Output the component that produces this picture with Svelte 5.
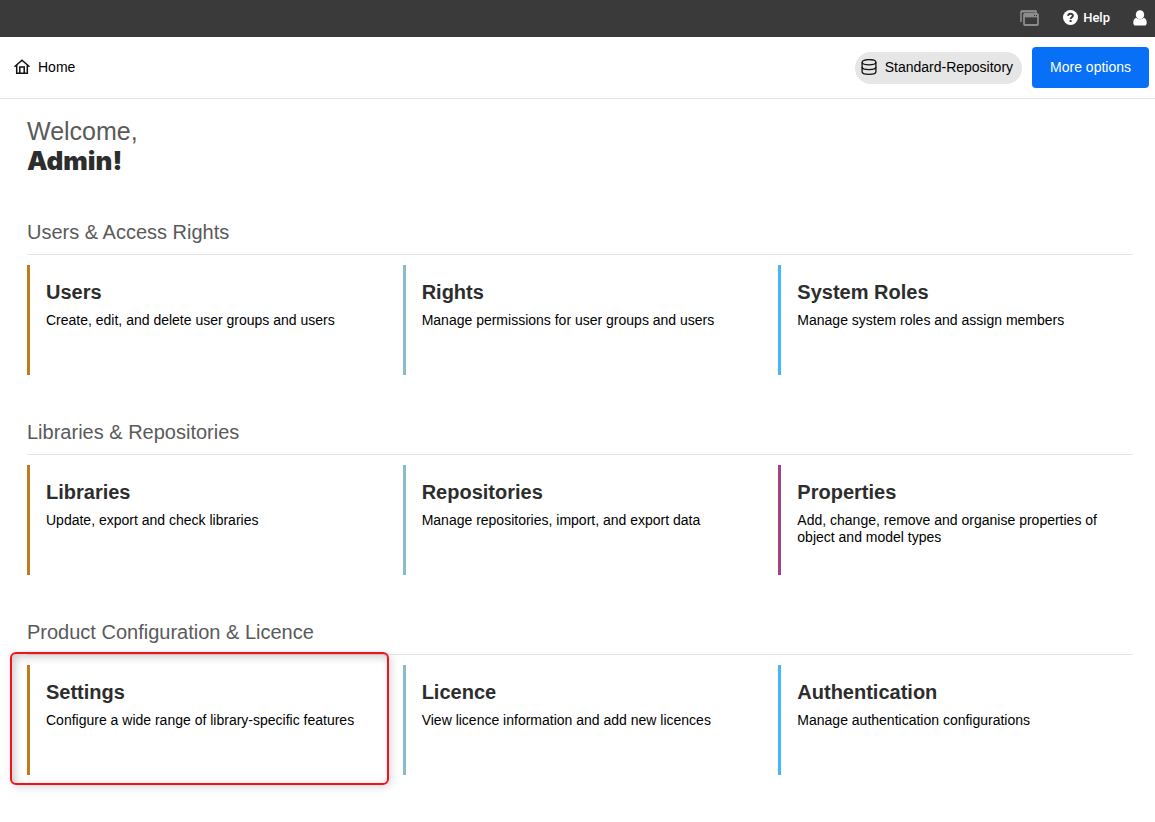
<script lang="ts">
    let username = $state("Admin");
    let repository = $state("Standard-Repository");

    const sections = [
        {
            title: "Users & Access Rights",
            cards: [
                { name: "Users", text: "Create, edit, and delete user groups and users", color: "orange" },
                { name: "Rights", text: "Manage permissions for user groups and users", color: "teal" },
                { name: "System Roles", text: "Manage system roles and assign members", color: "blue" },
            ],
        },
        {
            title: "Libraries & Repositories",
            cards: [
                { name: "Libraries", text: "Update, export and check libraries", color: "orange" },
                { name: "Repositories", text: "Manage repositories, import, and export data", color: "teal" },
                { name: "Properties", text: "Add, change, remove and organise properties of object and model types", color: "purple" },
            ],
        },
        {
            title: "Product Configuration & Licence",
            cards: [
                { name: "Settings", text: "Configure a wide range of library-specific features", color: "orange", marked: true },
                { name: "Licence", text: "View licence information and add new licences", color: "teal" },
                { name: "Authentication", text: "Manage authentication configurations", color: "blue" },
            ],
        },
    ];
</script>

<div class="topbar">
    <button class="top-btn" aria-label="Windows">
        <svg width="20" height="16" viewBox="0 0 20 16" fill="none" stroke="#8c8c8c">
            <path d="M1 12V2Q1 1 2 1H16V3" stroke-width="1.6" />
            <path d="M1 1.5H16" stroke-width="2" />
            <rect x="4" y="4" width="14" height="11" rx="1" stroke-width="1.8" />
            <path d="M4 5.7H18" stroke-width="3.4" />
            <path d="M14 5.5H17" stroke="#3a3a3a" stroke-dasharray="1 1" />
        </svg>
    </button>
    <button class="top-btn help">
        <svg width="15" height="15" viewBox="0 0 15 15">
            <circle cx="7.5" cy="7.5" r="7.5" fill="#fff" />
            <path d="M5.1 5.9Q5.3 3.7 7.5 3.7T9.9 5.7C9.9 7.3 7.6 7.2 7.6 9" fill="none" stroke="#3a3a3a" stroke-width="1.9" />
            <rect x="6.6" y="10" width="2" height="2" fill="#3a3a3a" />
        </svg>
        Help
    </button>
    <button class="top-btn" aria-label="Account">
        <svg width="14" height="16" viewBox="0 0 14 16" fill="#fff">
            <ellipse cx="7" cy="4.8" rx="4.2" ry="4.6" />
            <path d="M3 7.8Q4.8 9.5 7 9.5T11 7.8Q13.7 8.7 13.7 12.8Q13.7 15.6 11.4 15.6H2.6Q.3 15.6 .3 12.8Q.3 8.7 3 7.8Z" />
        </svg>
    </button>
</div>

<header class="header">
    <a class="home" href="/">
        <svg width="16" height="15" viewBox="0 0 16 15" fill="none" stroke="#111" stroke-width="1.5">
            <path d="M.5 7.8L8 1.3L15.5 7.8" />
            <path d="M2.7 6.3V14.2H13.3V6.3" />
            <path d="M5.8 14.2V8H10.2V14.2" />
        </svg>
        Home
    </a>
    <div class="actions">
        <button class="repository">
            <svg width="16" height="16" viewBox="0 0 16 16" fill="none" stroke="#111" stroke-width="1.3">
                <ellipse cx="8" cy="3.2" rx="6.9" ry="2.6" />
                <path d="M1.1 3.2V12.8C1.1 16.2 14.9 16.2 14.9 12.8V3.2" />
                <path d="M1.1 8C1.1 11.4 14.9 11.4 14.9 8" />
            </svg>
            {repository}
        </button>
        <button class="more">More options</button>
    </div>
</header>

<main>
    <h1>Welcome,<br /><strong>{username}!</strong></h1>

    {#each sections as section}
        <section>
            <h2>{section.title}</h2>
            <div class="cards">
                {#each section.cards as card}
                    <a class="card {card.color}" class:marked={card.marked} href="/{card.name.toLowerCase().replace(' ', '-')}">
                        <h3>{card.name}</h3>
                        <p>{card.text}</p>
                    </a>
                {/each}
            </div>
        </section>
    {/each}
</main>

<style>
    :global(body) {
        margin: 0;
        background: #fff;
        color: #000;
        font-family: "Liberation Sans", Arial, sans-serif;
        font-size: 14px;
    }

    button {
        border: 0;
        padding: 0;
        background: none;
        color: inherit;
        font: inherit;
        cursor: pointer;
    }

    a {
        color: inherit;
        text-decoration: none;
    }

    svg {
        display: block;
        flex: none;
    }

    .topbar {
        display: flex;
        justify-content: flex-end;
        align-items: center;
        gap: 23px;
        height: 37px;
        padding: 0 8px 2px 0;
        box-sizing: border-box;
        background: #3a3a3a;
        color: #fff;
    }

    .top-btn {
        display: flex;
        align-items: center;
        gap: 5px;
    }

    .help {
        font-family: Roboto, sans-serif;
        font-size: 13px;
        font-weight: 500;
    }

    .header {
        display: flex;
        justify-content: space-between;
        align-items: center;
        height: 61px;
        padding: 0 6px 0 14px;
        border-bottom: 1px solid #e4e4e4;
    }

    .home {
        display: flex;
        align-items: center;
        gap: 8px;
        padding-bottom: 2px;
    }

    .actions {
        display: flex;
        align-items: center;
        gap: 10px;
    }

    .repository {
        display: flex;
        align-items: center;
        gap: 8px;
        height: 32px;
        padding: 0 9px 1px 6px;
        border-radius: 16px;
        background: #e6e6e6;
    }

    .more {
        height: 41px;
        padding: 0 18px 2px;
        border-radius: 4px;
        background: #0870f6;
        color: #fff;
    }

    main {
        padding: 17px 22px 45px 27px;
    }

    h1 {
        margin: 0 0 44px;
        color: #5a5a5a;
        font-size: 25px;
        font-weight: 400;
        line-height: 30px;
    }

    h1 strong {
        color: #2d2d2d;
        font-family: "Arial Black", Inter, sans-serif;
        font-size: 26px;
        font-weight: 900;
    }

    section + section {
        margin-top: 45px;
    }

    h2 {
        margin: 0 0 10px;
        padding-bottom: 10px;
        border-bottom: 1px solid #e4e4e4;
        color: #5a5a5a;
        font-size: 20px;
        font-weight: 400;
        line-height: 24px;
    }

    .cards {
        display: grid;
        grid-template-columns: repeat(3, 1fr);
        gap: 21px;
    }

    .card {
        position: relative;
        min-height: 110px;
        padding: 15px 16px;
        box-sizing: border-box;
        border-left: 3px solid;
    }

    .orange {
        border-left-color: #c07a22;
    }

    .teal {
        border-left-color: #88bcc8;
    }

    .blue {
        border-left-color: #40b9fd;
    }

    .purple {
        border-left-color: #9f4286;
    }

    h3 {
        margin: 0 0 8px;
        color: #2d2d2d;
        font-size: 20px;
        line-height: 24px;
    }

    p {
        margin: 0;
        line-height: 17px;
    }

    /* red frame around the highlighted card */
    .marked::after {
        content: "";
        position: absolute;
        inset: -13px -7px -10px -20px;
        border: 2px solid #f5101a;
        border-radius: 6px;
        box-shadow: 2px 2px 8px rgba(0, 0, 0, 0.15), inset 3px 3px 8px rgba(0, 0, 0, 0.2);
    }
</style>
